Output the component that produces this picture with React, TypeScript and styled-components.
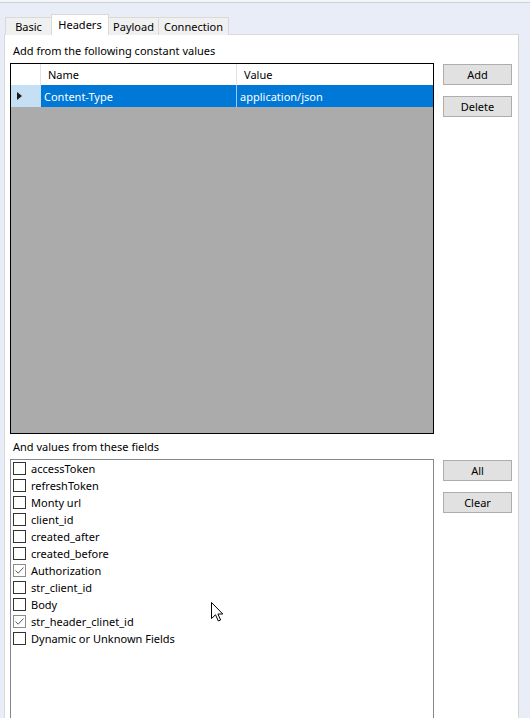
import React from "react";
import styled, { createGlobalStyle } from "styled-components";

const GlobalStyle = createGlobalStyle`
  html, body {
    margin: 0;
    padding: 0;
    background: #e9edf7;
  }
  * {
    box-sizing: border-box;
  }
`;

const FONT = `"Noto Sans", "Open Sans", "Liberation Sans", sans-serif`;

const fields = [
  { name: "accessToken", checked: false },
  { name: "refreshToken", checked: false },
  { name: "Monty url", checked: false },
  { name: "client_id", checked: false },
  { name: "created_after", checked: false },
  { name: "created_before", checked: false },
  { name: "Authorization", checked: true },
  { name: "str_client_id", checked: false },
  { name: "Body", checked: false },
  { name: "str_header_clinet_id", checked: true },
  { name: "Dynamic or Unknown Fields", checked: false },
];

const tabs = [
  { label: "Basic", width: 47 },
  { label: "Headers", width: 58 },
  { label: "Payload", width: 51 },
  { label: "Connection", width: 71 },
];

function App() {
  return (
    <>
      <GlobalStyle />
      <Page>
        <TopStrip />
        <TabStrip>
          {tabs.map((t, i) => (
            <Tab key={t.label} width={t.width} first={i === 0} active={t.label === "Headers"}>
              {t.label}
            </Tab>
          ))}
        </TabStrip>
        <Panel>
          <Section>
            <Caption>Add from the following constant values</Caption>
            <Row>
              <Grid>
                <HeaderRow>
                  <RowHeadCell header />
                  <HeadCell>Name</HeadCell>
                  <HeadCell last>Value</HeadCell>
                </HeaderRow>
                <DataRow>
                  <RowHeadCell>
                    <Arrow />
                  </RowHeadCell>
                  <DataCell>Content-Type</DataCell>
                  <DataCell last>application/json</DataCell>
                </DataRow>
              </Grid>
              <ButtonColumn>
                <Button>Add</Button>
                <Button>Delete</Button>
              </ButtonColumn>
            </Row>
          </Section>
          <Section grow>
            <Caption second>And values from these fields</Caption>
            <Row grow>
              <FieldList>
                {fields.map((f) => (
                  <FieldRow key={f.name}>
                    <CheckBox checked={f.checked}>
                      {f.checked && (
                        <svg width="11" height="11" viewBox="0 0 11 11">
                          <path d="M1.5 5.5 L4.2 8.2 L9.5 2.5" fill="none" stroke="#5a5a5a" strokeWidth="1" />
                        </svg>
                      )}
                    </CheckBox>
                    <FieldName>{f.name}</FieldName>
                  </FieldRow>
                ))}
              </FieldList>
              <ButtonColumn>
                <Button>All</Button>
                <Button>Clear</Button>
              </ButtonColumn>
            </Row>
          </Section>
          <Cursor width="13" height="20" viewBox="0 0 13 20">
            <path
              d="M0.5 0.5 L0.5 16.5 L4.5 12.8 L7.3 19 L9.6 18 L6.9 12 L11.8 12 Z"
              fill="#fff"
              stroke="#000"
              strokeWidth="1"
              strokeLinejoin="miter"
            />
          </Cursor>
        </Panel>
      </Page>
    </>
  );
}

export default App;

const Page = styled.div`
  width: 530px;
  height: 718px;
  overflow: hidden;
  display: flex;
  flex-direction: column;
  background: #e9edf7;
  font-family: ${FONT};
  font-size: 11px;
  color: #000;
`;

const TopStrip = styled.div`
  height: 3px;
  background: #f4f5f9;
  border-bottom: 1px solid #cdd0d6;
`;

const TabStrip = styled.div`
  display: flex;
  align-items: flex-end;
  height: 21px;
  margin-top: 11px;
  padding-left: 5px;
  position: relative;
  z-index: 1;
`;

const Tab = styled.div<{ width: number; active?: boolean; first?: boolean }>`
  width: ${({ width }) => width}px;
  height: ${({ active }) => (active ? 21 : 18)}px;
  margin-left: ${({ first }) => (first ? 0 : -1)}px;
  display: flex;
  align-items: center;
  justify-content: center;
  padding-top: ${({ active }) => (active ? 0 : 1)}px;
  border: 1px solid #d9d9d9;
  border-bottom: none;
  background: ${({ active }) => (active ? "#ffffff" : "#f0f0f0")};
  position: relative;
  z-index: ${({ active }) => (active ? 2 : 1)};
  white-space: nowrap;
  line-height: 16px;
`;

const Panel = styled.div`
  flex: 1;
  width: 515px;
  margin-left: 4px;
  margin-top: -1px;
  background: #fff;
  border: 1px solid #d9d9d9;
  border-right: 1px solid #d4d4d4;
  border-bottom: none;
  padding: 0 0 0 5px;
  display: flex;
  flex-direction: column;
  position: relative;
`;

const Section = styled.div<{ grow?: boolean }>`
  display: flex;
  flex-direction: column;
  flex: ${({ grow }) => (grow ? 1 : "none")};
  min-height: 0;
`;

const Caption = styled.div<{ second?: boolean }>`
  height: 16px;
  line-height: 16px;
  margin-top: ${({ second }) => (second ? 5 : 8)}px;
  margin-bottom: 4px;
  padding-left: 3px;
  white-space: nowrap;
`;

const Row = styled.div<{ grow?: boolean }>`
  display: flex;
  gap: 9px;
  flex: ${({ grow }) => (grow ? 1 : "none")};
  min-height: 0;
`;

const Grid = styled.div`
  width: 424px;
  height: 371px;
  border: 1px solid #000;
  background: #ababab;
  display: flex;
  flex-direction: column;
`;

const HeaderRow = styled.div`
  display: grid;
  grid-template-columns: 30px 196px 1fr;
  height: 21px;
  background: #fff;
`;

const DataRow = styled.div`
  display: grid;
  grid-template-columns: 30px 196px 1fr;
  height: 22px;
`;

const RowHeadCell = styled.div<{ header?: boolean }>`
  background: ${({ header }) => (header ? "#fff" : "#c5e0f5")};
  border-right: 1px solid ${({ header }) => (header ? "#e3e3e3" : "#c5e0f5")};
  display: flex;
  align-items: center;
  padding-left: 6px;
`;

const HeadCell = styled.div<{ last?: boolean }>`
  display: flex;
  align-items: center;
  padding-left: 7px;
  border-right: ${({ last }) => (last ? "none" : "1px solid #e3e3e3")};
  white-space: nowrap;
`;

const DataCell = styled.div<{ last?: boolean }>`
  display: flex;
  align-items: center;
  padding-left: 3px;
  background: #0078d7;
  color: #fff;
  border-right: ${({ last }) => (last ? "none" : "1px solid #9fc9ee")};
  white-space: nowrap;
  overflow: hidden;
`;

const Arrow = styled.span`
  width: 0;
  height: 0;
  border-top: 4.5px solid transparent;
  border-bottom: 4.5px solid transparent;
  border-left: 5px solid #1a1a1a;
`;

const ButtonColumn = styled.div`
  display: flex;
  flex-direction: column;
  gap: 11px;
  padding-top: 1px;
`;

const Button = styled.div`
  width: 69px;
  height: 21px;
  background: #e1e1e1;
  border: 1px solid #adadad;
  display: flex;
  align-items: center;
  justify-content: center;
  line-height: 16px;
`;

const FieldList = styled.div`
  width: 424px;
  border: 1px solid #828790;
  border-bottom: none;
  background: #fff;
  padding-left: 2px;
  display: flex;
  flex-direction: column;
`;

const FieldRow = styled.div`
  height: 17px;
  display: flex;
  align-items: center;
  gap: 5px;
`;

const CheckBox = styled.span<{ checked?: boolean }>`
  width: 13px;
  height: 13px;
  border: 1px solid ${({ checked }) => (checked ? "#8c8c8c" : "#333")};
  background: #fff;
  display: flex;
  align-items: center;
  justify-content: center;
`;

const FieldName = styled.span`
  white-space: nowrap;
  line-height: 16px;
`;

const Cursor = styled.svg`
  position: absolute;
  left: 206px;
  top: 567px;
  pointer-events: none;
`;
